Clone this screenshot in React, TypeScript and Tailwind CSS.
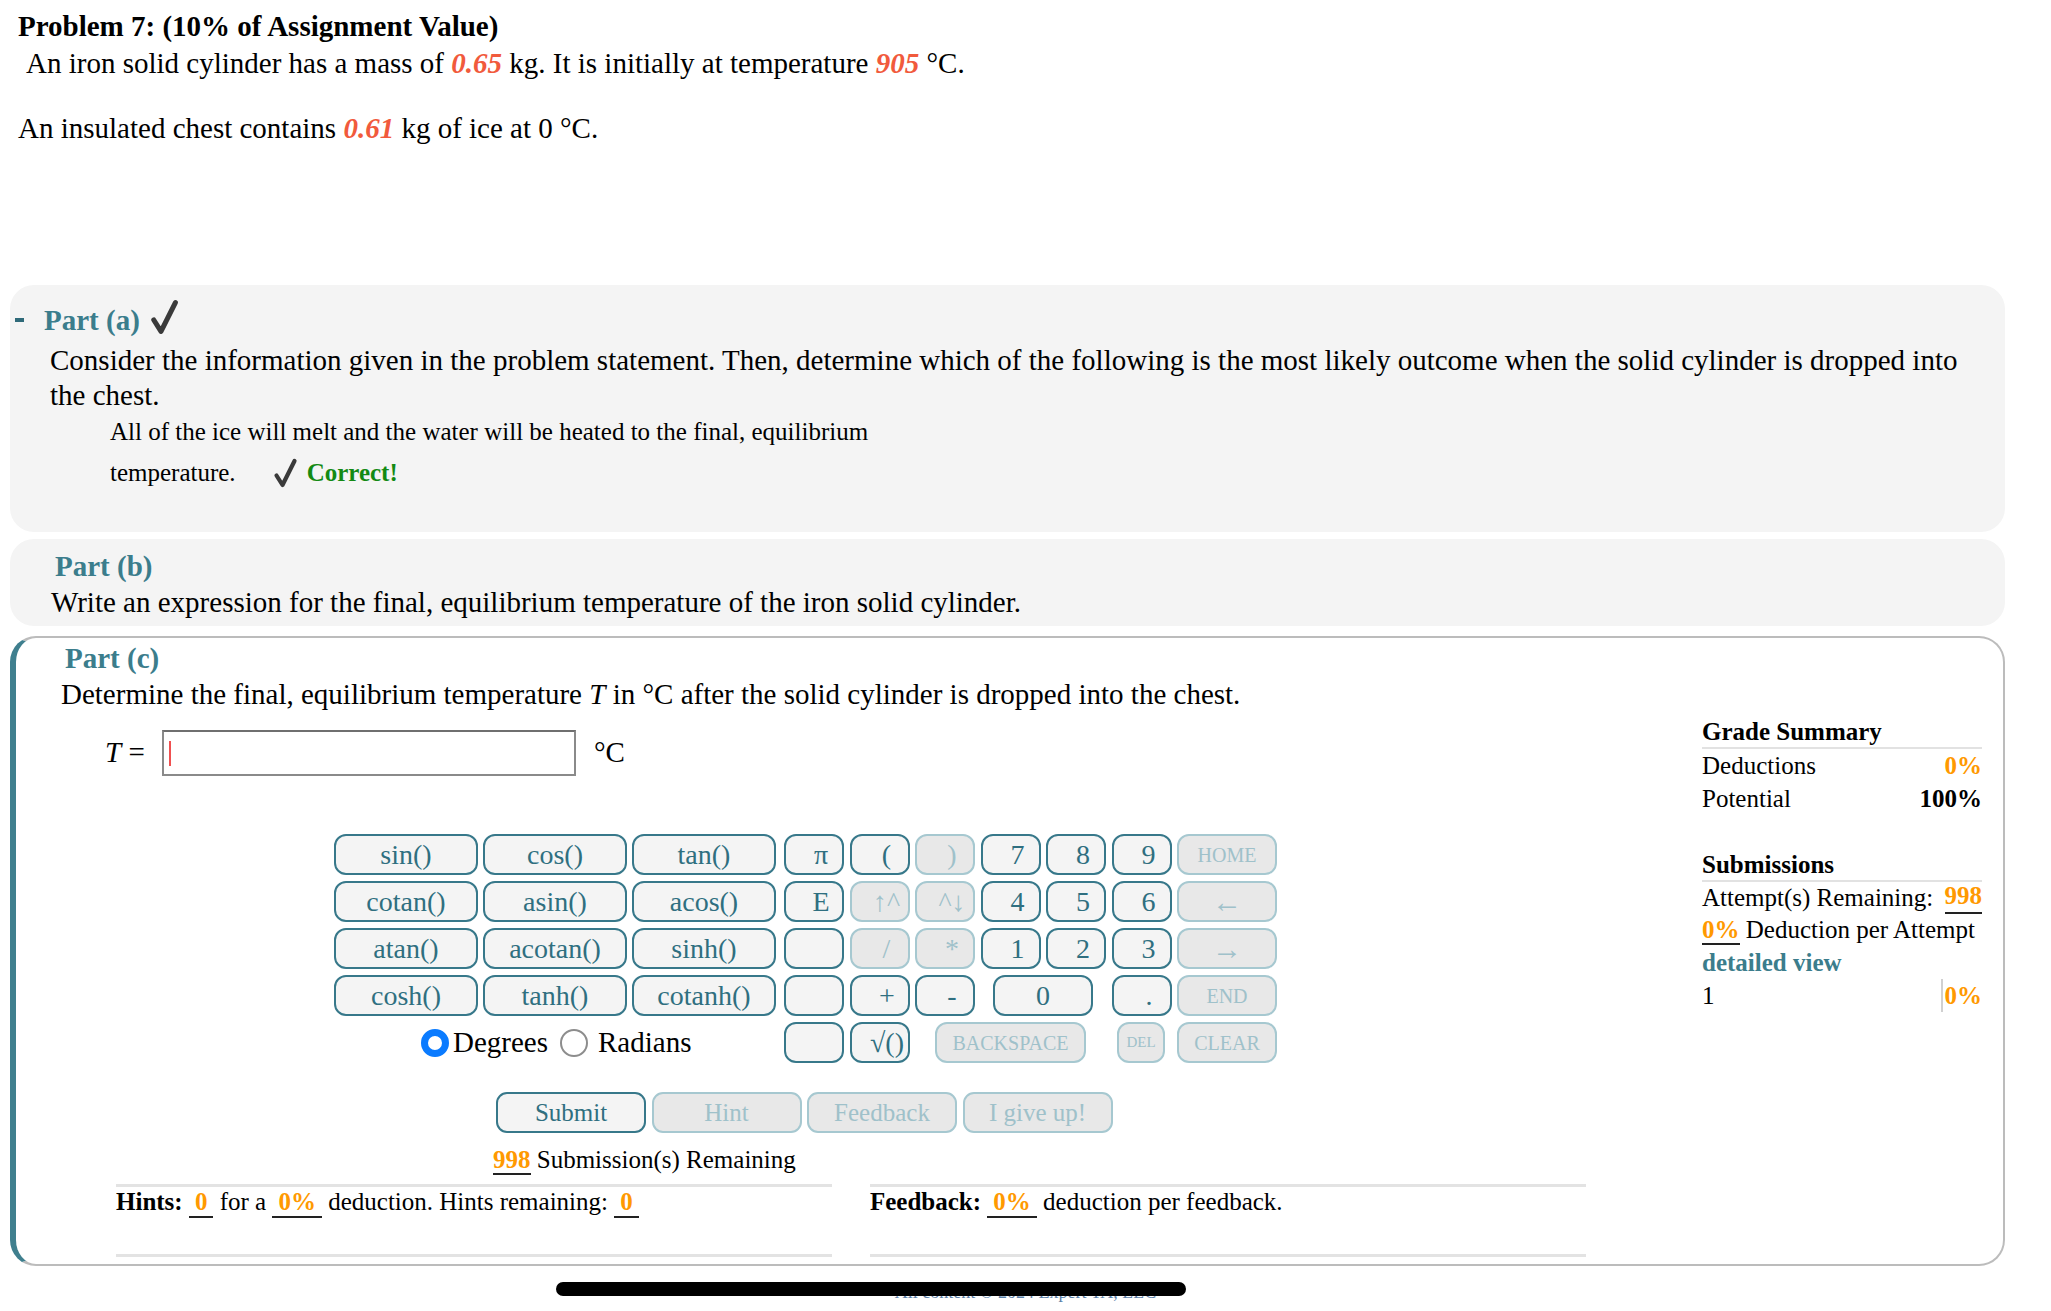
import React from 'react';

const FONT = "font-['Liberation_Serif','Times_New_Roman',serif]";

function Check({ className }: { className?: string }) {
    return (
        <svg viewBox="0 0 24 30" className={className} fill="none" stroke="#3a3a3a" strokeWidth="4.2" strokeLinecap="round" strokeLinejoin="round">
            <path d="M3.5 17.5 L9.5 27 L21.5 3" />
        </svg>
    );
}

function Key({ label, w = 'w-[60px]', disabled = false, small = false, extra = '' }: { label?: React.ReactNode; w?: string; disabled?: boolean; small?: boolean; extra?: string }) {
    const tone = disabled
        ? 'border-[#a6c8d0] bg-[#e8e8e8] text-[#9fc1ca]'
        : 'border-[#37788a] bg-[#f4f4f4] text-[#2f6f80]';
    return (
        <div className={`flex h-[41px] shrink-0 items-center justify-center rounded-[12px] border-2 ${tone} ${w} ${small ? 'pl-[14px]' : ''} ${extra}`}>
            {label}
        </div>
    );
}

function Fn({ label }: { label: string }) {
    return <Key label={label} w="w-[144px]" extra="text-[28px]" />;
}

function Radio({ on }: { on: boolean }) {
    return on ? (
        <span className="inline-block h-[28px] w-[28px] rounded-full border-[7px] border-[#0a7bff] bg-white" />
    ) : (
        <span className="inline-block h-[28px] w-[28px] rounded-full border-2 border-[#8d8d8d] bg-white" />
    );
}

function Under({ children }: { children: React.ReactNode }) {
    return <span className="inline-block border-b-2 border-[#222] px-[6px] font-bold leading-[28px] text-[#ff9900]">{children}</span>;
}

export default function App() {
    const teal = 'text-[#3b7d8c]';
    return (
        <div className={`relative h-[1311px] w-full overflow-hidden bg-white text-black ${FONT}`}>
            {/* problem statement */}
            <div className="pl-[18px] pt-[10px]">
                <div className="text-[29px] font-bold leading-[32px]">Problem 7: (10% of Assignment Value)</div>
                <div className="mt-[5px] pl-[8px] text-[29px] leading-[32px]">
                    An iron solid cylinder has a mass of <span className="font-bold italic text-[#f15a3c]">0.65</span> kg. It is initially at temperature{' '}
                    <span className="font-bold italic text-[#f15a3c]">905</span> °C.
                </div>
                <div className="mt-[33px] text-[29px] leading-[32px]">
                    An insulated chest contains <span className="font-bold italic text-[#f15a3c]">0.61</span> kg of ice at 0 °C.
                </div>
            </div>

            {/* Part (a) */}
            <div className="ml-[10px] mr-[46px] mt-[141px] h-[247px] rounded-[24px] bg-[#f4f4f4] pt-[18px]">
                <div className="flex h-[34px] items-center">
                    <span className="ml-[5px] mr-[20px] h-[4px] w-[9px] bg-[#2f6a79]" />
                    <span className={`text-[29px] font-bold leading-[34px] ${teal}`}>Part (a)</span>
                    <Check className="ml-[9px] h-[36px] w-[30px] -translate-y-[3px]" />
                </div>
                <div className="ml-[40px] mt-[6px] text-[29px] leading-[35px]">
                    <div className="whitespace-nowrap">
                        Consider the information given in the problem statement. Then, determine which of the following is the most likely outcome when the solid cylinder is dropped into
                    </div>
                    <div>the chest.</div>
                </div>
                <div className="-mt-[2px] ml-[100px] text-[25px] leading-[41px]">
                    <div>All of the ice will melt and the water will be heated to the final, equilibrium</div>
                    <div className="flex items-center">
                        <span>temperature.</span>
                        <Check className="ml-[36px] h-[30px] w-[26px]" />
                        <span className="ml-[9px] font-bold text-[#138a13]">Correct!</span>
                    </div>
                </div>
            </div>

            {/* Part (b) */}
            <div className="ml-[10px] mr-[46px] mt-[7px] h-[87px] rounded-[24px] bg-[#f4f4f4] pt-[10px]">
                <div className={`ml-[45px] text-[29px] font-bold leading-[34px] ${teal}`}>Part (b)</div>
                <div className="ml-[41px] mt-[2px] text-[29px] leading-[35px]">
                    Write an expression for the final, equilibrium temperature of the iron solid cylinder.
                </div>
            </div>

            {/* Part (c) */}
            <div className="ml-[10px] mr-[46px] mt-[10px] box-border h-[630px] rounded-[26px] border-2 border-l-[6px] border-[#bcbcbc] border-l-[#3f7f8e] pt-[3px]">
                <div className={`ml-[49px] text-[29px] font-bold leading-[34px] ${teal}`}>Part (c)</div>
                <div className="ml-[45px] mt-[2px] text-[29px] leading-[35px]">
                    Determine the final, equilibrium temperature <i>T</i> in °C after the solid cylinder is dropped into the chest.
                </div>

                <div className="flex">
                    {/* left: answer area */}
                    <div className="flex-1">
                        <div className="mt-[18px] flex h-[46px] items-center">
                            <span className="ml-[89px] w-[57px] text-[29px]">
                                <i>T</i> =
                            </span>
                            <div className="relative h-[46px] w-[414px] border-2 border-[#8a8a8a] border-t-[#6f6f6f] bg-white">
                                <span className="absolute left-[5px] top-[9px] h-[25px] w-[2px] bg-[#f05050]" />
                            </div>
                            <span className="ml-[18px] text-[29px]">°C</span>
                        </div>

                        {/* keypad */}
                        <div className="ml-[318px] mt-[58px] flex flex-col gap-[6px] text-[28px]">
                            <div className="flex">
                                <div className="flex w-[442px] gap-[5px]">
                                    <Fn label="sin()" />
                                    <Fn label="cos()" />
                                    <Fn label="tan()" />
                                </div>
                                <div className="ml-[8px] flex gap-[5.5px]">
                                    <Key label="π" small />
                                    <Key label="(" small />
                                    <Key label=")" small disabled />
                                    <Key label="7" small />
                                    <Key label="8" small />
                                    <Key label="9" small />
                                    <Key label="HOME" w="w-[100px]" disabled extra="text-[20px]" />
                                </div>
                            </div>
                            <div className="flex">
                                <div className="flex w-[442px] gap-[5px]">
                                    <Fn label="cotan()" />
                                    <Fn label="asin()" />
                                    <Fn label="acos()" />
                                </div>
                                <div className="ml-[8px] flex gap-[5.5px]">
                                    <Key label="E" small />
                                    <Key label="↑^" small disabled />
                                    <Key label="^↓" small disabled />
                                    <Key label="4" small />
                                    <Key label="5" small />
                                    <Key label="6" small />
                                    <Key label="←" w="w-[100px]" disabled extra="text-[30px]" />
                                </div>
                            </div>
                            <div className="flex">
                                <div className="flex w-[442px] gap-[5px]">
                                    <Fn label="atan()" />
                                    <Fn label="acotan()" />
                                    <Fn label="sinh()" />
                                </div>
                                <div className="ml-[8px] flex gap-[5.5px]">
                                    <Key small />
                                    <Key label="/" small disabled />
                                    <Key label="*" small disabled />
                                    <Key label="1" small />
                                    <Key label="2" small />
                                    <Key label="3" small />
                                    <Key label="→" w="w-[100px]" disabled extra="text-[30px]" />
                                </div>
                            </div>
                            <div className="flex">
                                <div className="flex w-[442px] gap-[5px]">
                                    <Fn label="cosh()" />
                                    <Fn label="tanh()" />
                                    <Fn label="cotanh()" />
                                </div>
                                <div className="ml-[8px] flex">
                                    <Key small />
                                    <Key label="+" small extra="ml-[6px]" />
                                    <Key label="-" small extra="ml-[5px]" />
                                    <Key label="0" w="w-[100px]" extra="ml-[18px]" />
                                    <Key label="." small extra="ml-[19px]" />
                                    <Key label="END" w="w-[100px]" disabled extra="ml-[5px] text-[20px]" />
                                </div>
                            </div>
                            <div className="flex">
                                <div className="flex h-[41px] w-[442px] items-center text-[29px] leading-[41px]">
                                    <span className="ml-[87px] flex items-center">
                                        <Radio on />
                                    </span>
                                    <span className="ml-[4px]">Degrees</span>
                                    <span className="ml-[12px] flex items-center">
                                        <Radio on={false} />
                                    </span>
                                    <span className="ml-[10px]">Radians</span>
                                </div>
                                <div className="ml-[8px] flex">
                                    <Key small />
                                    <Key label="√()" small extra="ml-[6px]" />
                                    <Key label="BACKSPACE" w="w-[151px]" disabled extra="ml-[25px] text-[20px]" />
                                    <Key label="DEL" w="w-[48px]" disabled extra="ml-[31px] text-[15px]" />
                                    <Key label="CLEAR" w="w-[100px]" disabled extra="ml-[12px] text-[20px]" />
                                </div>
                            </div>
                        </div>

                        {/* actions */}
                        <div className="ml-[480px] mt-[29px] flex gap-[5.5px] text-[25px]">
                            <div className="flex h-[41px] w-[150px] items-center justify-center rounded-[11px] border-2 border-[#37788a] bg-[#f4f4f4] text-[#2f6f80]">Submit</div>
                            <div className="flex h-[41px] w-[150px] items-center justify-center rounded-[11px] border-2 border-[#a6c8d0] bg-[#e8e8e8] text-[#9fc1ca]">Hint</div>
                            <div className="flex h-[41px] w-[150px] items-center justify-center rounded-[11px] border-2 border-[#a6c8d0] bg-[#e8e8e8] text-[#9fc1ca]">Feedback</div>
                            <div className="flex h-[41px] w-[150px] items-center justify-center rounded-[11px] border-2 border-[#a6c8d0] bg-[#e8e8e8] text-[#9fc1ca]">I give up!</div>
                        </div>
                        <div className="ml-[477px] mt-[12px] text-[25px] leading-[30px]">
                            <span className="border-b-2 border-[#222] font-bold text-[#ff9900]">998</span> Submission(s) Remaining
                        </div>

                        {/* hints / feedback */}
                        <div className="ml-[100px] mt-[9px] flex gap-[38px] text-[25px]">
                            <div className="h-[73px] w-[716px] border-y-[3px] border-[#e3e3e3] leading-[30px]">
                                <span className="font-bold">Hints:</span> <Under>0</Under> for a <Under>0%</Under> deduction. Hints remaining: <Under>0</Under>
                            </div>
                            <div className="h-[73px] w-[716px] border-y-[3px] border-[#e3e3e3] leading-[30px]">
                                <span className="font-bold">Feedback:</span> <Under>0%</Under> deduction per feedback.
                            </div>
                        </div>
                    </div>

                    {/* right: grade summary */}
                    <div className="mr-[21px] mt-[4px] w-[280px] text-[25px]">
                        <div className="border-b-2 border-[#e2e2e2] font-bold leading-[31px]">Grade Summary</div>
                        <div className="flex justify-between leading-[33px]">
                            <span>Deductions</span>
                            <span className="font-bold text-[#ff9900]">0%</span>
                        </div>
                        <div className="flex justify-between leading-[33px]">
                            <span>Potential</span>
                            <span className="font-bold">100%</span>
                        </div>
                        <div className="mt-[34px] border-b-2 border-[#e2e2e2] font-bold leading-[31px]">Submissions</div>
                        <div className="flex justify-between leading-[32px]">
                            <span>Attempt(s) Remaining:</span>
                            <span className="border-b-2 border-[#222] font-bold leading-[28px] text-[#ff9900]">998</span>
                        </div>
                        <div className="leading-[32px]">
                            <span className="border-b-2 border-[#222] font-bold text-[#ff9900]">0%</span> Deduction per Attempt
                        </div>
                        <div className="font-bold leading-[33px] text-[#3b7d8c]">detailed view</div>
                        <div className="flex justify-between leading-[33px]">
                            <span>1</span>
                            <span className="border-l-2 border-[#d0d0d0] pl-[2px] font-bold text-[#ff9900]">0%</span>
                        </div>
                    </div>
                </div>
            </div>

            {/* footer */}
            <div className="mt-[14px] text-center text-[18px] leading-[24px] text-[#5b80a8]">All content © 2024 Expert TA, LLC</div>
            <div className="absolute left-[556px] top-[1282px] h-[14px] w-[630px] rounded-full bg-black" />
        </div>
    );
}
